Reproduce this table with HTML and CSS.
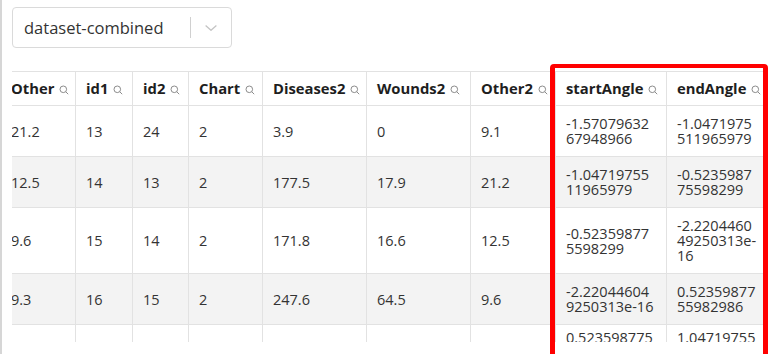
FILE: index.html
```html
<!DOCTYPE html>
<html lang="en">
<head>
<meta charset="utf-8">
<title>dataset-combined</title>
<link rel="stylesheet" href="styles.css">
</head>
<body>
<div class="page">
  <div class="select">
    <div class="select-value">dataset-combined</div>
    <span class="select-sep"></span>
    <span class="select-arrow">
      <svg width="12" height="6" viewBox="0 0 12 6"><polyline points="0.6,0.6 6,5.3 11.4,0.6" fill="none" stroke="#c4c4c4" stroke-width="1.3"/></svg>
    </span>
  </div>

  <div class="table-wrap">
    <div class="table">
      <div class="row head">
        <div class="cell"><span>Other</span><svg class="q" viewBox="0 0 10 10"><circle cx="4.3" cy="4.3" r="3.3"/><line x1="6.7" y1="6.7" x2="9.2" y2="9.2"/></svg></div>
        <div class="cell"><span>id1</span><svg class="q" viewBox="0 0 10 10"><circle cx="4.3" cy="4.3" r="3.3"/><line x1="6.7" y1="6.7" x2="9.2" y2="9.2"/></svg></div>
        <div class="cell"><span>id2</span><svg class="q" viewBox="0 0 10 10"><circle cx="4.3" cy="4.3" r="3.3"/><line x1="6.7" y1="6.7" x2="9.2" y2="9.2"/></svg></div>
        <div class="cell"><span>Chart</span><svg class="q" viewBox="0 0 10 10"><circle cx="4.3" cy="4.3" r="3.3"/><line x1="6.7" y1="6.7" x2="9.2" y2="9.2"/></svg></div>
        <div class="cell"><span>Diseases2</span><svg class="q" viewBox="0 0 10 10"><circle cx="4.3" cy="4.3" r="3.3"/><line x1="6.7" y1="6.7" x2="9.2" y2="9.2"/></svg></div>
        <div class="cell"><span>Wounds2</span><svg class="q" viewBox="0 0 10 10"><circle cx="4.3" cy="4.3" r="3.3"/><line x1="6.7" y1="6.7" x2="9.2" y2="9.2"/></svg></div>
        <div class="cell"><span>Other2</span><svg class="q" viewBox="0 0 10 10"><circle cx="4.3" cy="4.3" r="3.3"/><line x1="6.7" y1="6.7" x2="9.2" y2="9.2"/></svg></div>
        <div class="cell"><span>startAngle</span><svg class="q" viewBox="0 0 10 10"><circle cx="4.3" cy="4.3" r="3.3"/><line x1="6.7" y1="6.7" x2="9.2" y2="9.2"/></svg></div>
        <div class="cell"><span>endAngle</span><svg class="q" viewBox="0 0 10 10"><circle cx="4.3" cy="4.3" r="3.3"/><line x1="6.7" y1="6.7" x2="9.2" y2="9.2"/></svg></div>
      </div>
      <div class="row">
        <div class="cell">21.2</div><div class="cell">13</div><div class="cell">24</div><div class="cell">2</div><div class="cell">3.9</div><div class="cell">0</div><div class="cell">9.1</div><div class="cell">-1.5707963267948966</div><div class="cell">-1.0471975511965979</div>
      </div>
      <div class="row alt">
        <div class="cell">12.5</div><div class="cell">14</div><div class="cell">13</div><div class="cell">2</div><div class="cell">177.5</div><div class="cell">17.9</div><div class="cell">21.2</div><div class="cell">-1.0471975511965979</div><div class="cell">-0.523598775598299</div>
      </div>
      <div class="row">
        <div class="cell">9.6</div><div class="cell">15</div><div class="cell">14</div><div class="cell">2</div><div class="cell">171.8</div><div class="cell">16.6</div><div class="cell">12.5</div><div class="cell">-0.523598775598299</div><div class="cell">-2.220446049250313e-16</div>
      </div>
      <div class="row alt">
        <div class="cell">9.3</div><div class="cell">16</div><div class="cell">15</div><div class="cell">2</div><div class="cell">247.6</div><div class="cell">64.5</div><div class="cell">9.6</div><div class="cell">-2.220446049250313e-16</div><div class="cell">0.5235987755982986</div>
      </div>
      <div class="row cut">
        <div class="cell"></div><div class="cell"></div><div class="cell"></div><div class="cell"></div><div class="cell"></div><div class="cell"></div><div class="cell"></div><div class="cell">0.5235987755982988</div><div class="cell">1.0471975511965976</div>
      </div>
    </div>
  </div>

  <div class="highlight"></div>
</div>
</body>
</html>
```

FILE: styles.css
```css
html, body {
  margin: 0;
  padding: 0;
  background: #fff;
}

body {
  font-family: "Open Sans", "Noto Sans", sans-serif;
  color: #333;
}

.page {
  position: relative;
  box-sizing: border-box;
  height: 354px;
  width: 768px;
  border-left: 2px solid #d6d6d6;
  padding: 7px 0 0 10px;
  overflow: hidden;
}

/* select */
.select {
  box-sizing: border-box;
  width: 220px;
  height: 41px;
  border: 1px solid #dadada;
  border-radius: 4px;
  display: flex;
  align-items: center;
}

.select-value {
  flex: 1;
  padding-left: 11px;
  font-size: 16.5px;
  color: #333;
}

.select-sep {
  width: 1px;
  height: 21px;
  background: #d0d0d0;
}

.select-arrow {
  display: flex;
  align-items: center;
  padding: 0 14px;
}

.select-arrow svg {
  display: block;
}

/* table */
.table-wrap {
  margin-top: 23px;
  height: 271px;
  overflow: hidden;
}

.table {
  margin-left: -11px;
  width: 768px;
  border-top: 1px solid #e2e2e2;
}

.row {
  display: grid;
  grid-template-columns: 75px 57px 56px 74px 104px 104px 85px 111px 102px;
  background: #fff;
}

.row.alt {
  background: #f3f3f3;
}

.cell {
  box-sizing: border-box;
  display: flex;
  align-items: center;
  padding: 10px 10px;
  border-right: 1px solid #e2e2e2;
  border-bottom: 1px solid #e2e2e2;
  font-size: 14.5px;
  line-height: 15px;
  color: #333;
  word-break: break-all;
  min-width: 0;
}

.head .cell {
  padding: 9px 10px;
  font-weight: 700;
  font-size: 14.8px;
  color: #1e1e1e;
  white-space: nowrap;
  gap: 5px;
}

.row.cut .cell {
  padding-top: 5px;
}

.q {
  width: 10px;
  height: 10px;
  flex: none;
  margin-top: 2px;
  fill: none;
  stroke: #8c8c8c;
  stroke-width: 1;
}

/* red highlight */
.highlight {
  position: absolute;
  left: 548px;
  top: 64px;
  width: 218px;
  height: 310px;
  box-sizing: border-box;
  border-style: solid;
  border-color: #ff0000;
  border-width: 4px 5px;
  border-radius: 4px;
}
```
